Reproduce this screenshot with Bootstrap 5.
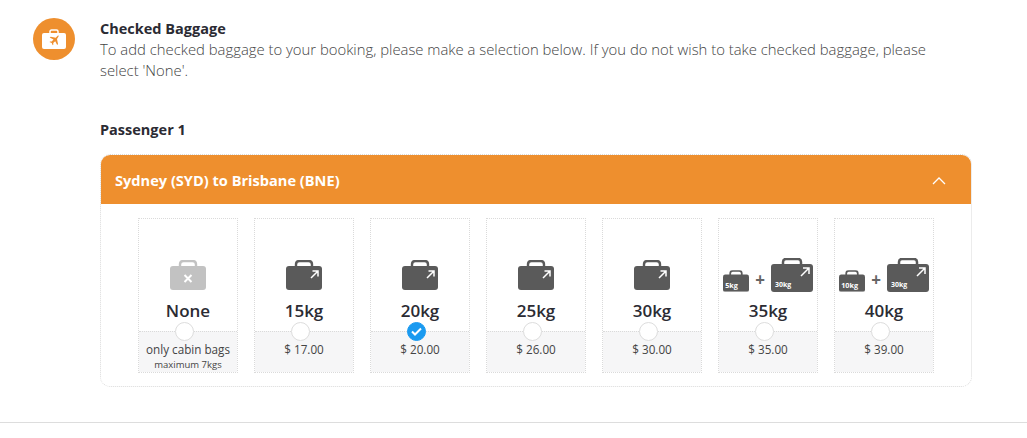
<!DOCTYPE html>
<html lang="en">
<head>
    <meta charset="UTF-8">
    <title>Checked Baggage</title>
    <link href="https://cdn.jsdelivr.net/npm/bootstrap@5.3.0/dist/css/bootstrap.min.css" rel="stylesheet">
    <style>
        body { font-family: "Open Sans", "Noto Sans", sans-serif; color: #333; background: #fff; overflow: hidden; }
        .page-wrap { height: 423px; padding: 18px 55px 0 33px; border-bottom: 1px solid #ddd; }
        .icon-col { width: 67px; flex: none; }
        .round-icon { width: 42px; height: 42px; border-radius: 50%; background: #ee8f2e; }
        .bag-title { font-size: 14.5px; font-weight: 700; line-height: 21px; margin: 0; color: #2b2b33; }
        .bag-desc { font-size: 14.85px; line-height: 21px; margin: 0; color: #444; font-weight: 300; width: 850px; }
        .pax-title { font-size: 14.5px; font-weight: 700; line-height: 21px; margin: 38px 0 14px; color: #2b2b33; }
        .seg-panel { border: 1px dotted #dadada; border-radius: 10px; height: 233px; overflow: hidden; }
        .seg-head { background: #ee8f2e; height: 50px; padding: 3px 26px 0 15px; color: #fff; font-size: 14.6px; font-weight: 700; margin: -1px -1px 0; }
        .tile-row { padding: 14px 37px 0; gap: 16px; }
        .tile { width: 100px; height: 155px; border: 1px dotted #dadada; position: relative; }
        .tile-top { height: 112px; padding-bottom: 9px; }
        .tile-art { height: 34px; }
        .bag-one { margin-bottom: 2px; }
        .tile-label { font-size: 17px; font-weight: 600; line-height: 23px; margin-top: 7px; color: #2b2b33; }
        .tile-foot { height: 41px; background: #f6f6f7; border-top: 1px dotted #dadada; font-size: 11.7px; line-height: 15px; color: #444; padding-top: 10px; }
        .tile-foot small { display: block; font-size: 9.5px; line-height: 15px; }
        .tile-radio { position: absolute; left: 36px; top: 103px; width: 19px; height: 19px; border-radius: 50%; background: #fff; border: 1px solid #ddd; }
        .tile-radio.picked { background: #1a9af0; border-color: #1a9af0; }
        .plus-sign { color: #666; font-size: 17px; font-weight: 700; width: 22px; text-align: center; line-height: 1; }
        svg text { font-family: "Open Sans", sans-serif; font-weight: 700; fill: #fff; }
    </style>
</head>
<body>
<svg width="0" height="0" class="d-none">
    <defs>
        <symbol id="bag" viewBox="0 0 36 30">
            <path d="M10 8V4.500C10 2.500 11.500 1 13.500 1h9C24.500 1 26 2.500 26 4.500V8" fill="none" stroke="currentColor" stroke-width="2.400"/>
            <rect y="6" width="36" height="24" rx="3" fill="currentColor"/>
        </symbol>
    </defs>
</svg>

<div class="page-wrap d-flex">
    <div class="icon-col">
        <div class="round-icon d-flex align-items-center justify-content-center">
            <svg width="24" height="20" viewBox="0 0 24 20">
                <path d="M8 5V2.500C8 1.600 8.600 1 9.500 1h5c.9 0 1.500.6 1.500 1.500V5" fill="none" stroke="#fff" stroke-width="1.500"/>
                <rect y="4" width="24" height="16" rx="2" fill="#fff"/>
                <path d="M16.500 7.500c.6-.6-.2-1.200-.8-.7l-2 2-5-1-1 .8 3.800 2-1.800 2-1.500-.2-.7.700 2.200 1 1 2.200.7-.7-.2-1.500 2-1.800 2 3.800.8-1-1-5z" fill="#ee8f2e"/>
            </svg>
        </div>
    </div>
    <div class="flex-grow-1">
        <p class="bag-title">Checked Baggage</p>
        <p class="bag-desc">To add checked baggage to your booking, please make a selection below. If you do not wish to take checked baggage, please select 'None'.</p>
        <p class="pax-title">Passenger 1</p>
        <div class="seg-panel">
            <div class="seg-head d-flex align-items-center justify-content-between">
                <span>Sydney (SYD) to Brisbane (BNE)</span>
                <svg width="14" height="8" viewBox="0 0 14 8"><path d="M1 7l6-6 6 6" fill="none" stroke="#fff" stroke-width="1.300"/></svg>
            </div>
            <div class="tile-row d-flex">
                <div class="tile text-center">
                    <div class="tile-top d-flex flex-column justify-content-end align-items-center">
                        <div class="tile-art d-flex align-items-end justify-content-center">
                            <svg class="bag-one" width="36" height="30" viewBox="0 0 36 30" color="#c2c2c2"><use href="#bag"/><path d="M14.500 15l7 7m0-7l-7 7" stroke="#fff" stroke-width="2"/></svg>
                        </div>
                        <div class="tile-label">None</div>
                    </div>
                    <div class="tile-foot">only cabin bags<small>maximum 7kgs</small></div>
                    <span class="tile-radio"></span>
                </div>
                <div class="tile text-center">
                    <div class="tile-top d-flex flex-column justify-content-end align-items-center">
                        <div class="tile-art d-flex align-items-end justify-content-center">
                            <svg class="bag-one" width="36" height="30" viewBox="0 0 36 30" color="#5a5a5a"><use href="#bag"/><path d="M25 18l7-7m-5.500 0H32v5.500" fill="none" stroke="#fff" stroke-width="1.500"/></svg>
                        </div>
                        <div class="tile-label">15kg</div>
                    </div>
                    <div class="tile-foot">$ 17.00</div>
                    <span class="tile-radio"></span>
                </div>
                <div class="tile text-center">
                    <div class="tile-top d-flex flex-column justify-content-end align-items-center">
                        <div class="tile-art d-flex align-items-end justify-content-center">
                            <svg class="bag-one" width="36" height="30" viewBox="0 0 36 30" color="#5a5a5a"><use href="#bag"/><path d="M25 18l7-7m-5.500 0H32v5.500" fill="none" stroke="#fff" stroke-width="1.500"/></svg>
                        </div>
                        <div class="tile-label">20kg</div>
                    </div>
                    <div class="tile-foot">$ 20.00</div>
                    <span class="tile-radio picked d-flex align-items-center justify-content-center">
                        <svg width="11" height="9" viewBox="0 0 11 9"><path d="M1 4.500l3 3 6-6" fill="none" stroke="#fff" stroke-width="2"/></svg>
                    </span>
                </div>
                <div class="tile text-center">
                    <div class="tile-top d-flex flex-column justify-content-end align-items-center">
                        <div class="tile-art d-flex align-items-end justify-content-center">
                            <svg class="bag-one" width="36" height="30" viewBox="0 0 36 30" color="#5a5a5a"><use href="#bag"/><path d="M25 18l7-7m-5.500 0H32v5.500" fill="none" stroke="#fff" stroke-width="1.500"/></svg>
                        </div>
                        <div class="tile-label">25kg</div>
                    </div>
                    <div class="tile-foot">$ 26.00</div>
                    <span class="tile-radio"></span>
                </div>
                <div class="tile text-center">
                    <div class="tile-top d-flex flex-column justify-content-end align-items-center">
                        <div class="tile-art d-flex align-items-end justify-content-center">
                            <svg class="bag-one" width="36" height="30" viewBox="0 0 36 30" color="#5a5a5a"><use href="#bag"/><path d="M25 18l7-7m-5.500 0H32v5.500" fill="none" stroke="#fff" stroke-width="1.500"/></svg>
                        </div>
                        <div class="tile-label">30kg</div>
                    </div>
                    <div class="tile-foot">$ 30.00</div>
                    <span class="tile-radio"></span>
                </div>
                <div class="tile text-center">
                    <div class="tile-top d-flex flex-column justify-content-end align-items-center">
                        <div class="tile-art d-flex align-items-end justify-content-center">
                            <svg width="26" height="22" viewBox="0 0 36 30" color="#5a5a5a"><use href="#bag"/><text x="3" y="25" font-size="10">5kg</text></svg>
                            <span class="plus-sign mb-1">+</span>
                            <svg width="42" height="34" viewBox="0 0 42 34" color="#5a5a5a"><path d="M12 8V4c0-2 1.500-3 3-3h12c1.500 0 3 1 3 3v4" fill="none" stroke="currentColor" stroke-width="2.500"/><rect y="6" width="42" height="28" rx="3" fill="currentColor"/><path d="M30 18l8-8m-6 0h6v6" fill="none" stroke="#fff" stroke-width="1.500"/><text x="4" y="29" font-size="7">30kg</text></svg>
                        </div>
                        <div class="tile-label">35kg</div>
                    </div>
                    <div class="tile-foot">$ 35.00</div>
                    <span class="tile-radio"></span>
                </div>
                <div class="tile text-center">
                    <div class="tile-top d-flex flex-column justify-content-end align-items-center">
                        <div class="tile-art d-flex align-items-end justify-content-center">
                            <svg width="26" height="22" viewBox="0 0 36 30" color="#5a5a5a"><use href="#bag"/><text x="3" y="25" font-size="10">10kg</text></svg>
                            <span class="plus-sign mb-1">+</span>
                            <svg width="42" height="34" viewBox="0 0 42 34" color="#5a5a5a"><path d="M12 8V4c0-2 1.500-3 3-3h12c1.500 0 3 1 3 3v4" fill="none" stroke="currentColor" stroke-width="2.500"/><rect y="6" width="42" height="28" rx="3" fill="currentColor"/><path d="M30 18l8-8m-6 0h6v6" fill="none" stroke="#fff" stroke-width="1.500"/><text x="4" y="29" font-size="7">30kg</text></svg>
                        </div>
                        <div class="tile-label">40kg</div>
                    </div>
                    <div class="tile-foot">$ 39.00</div>
                    <span class="tile-radio"></span>
                </div>
            </div>
        </div>
    </div>
</div>
<script src="https://cdn.jsdelivr.net/npm/bootstrap@5.3.0/dist/js/bootstrap.bundle.min.js"></script>
</body>
</html>
